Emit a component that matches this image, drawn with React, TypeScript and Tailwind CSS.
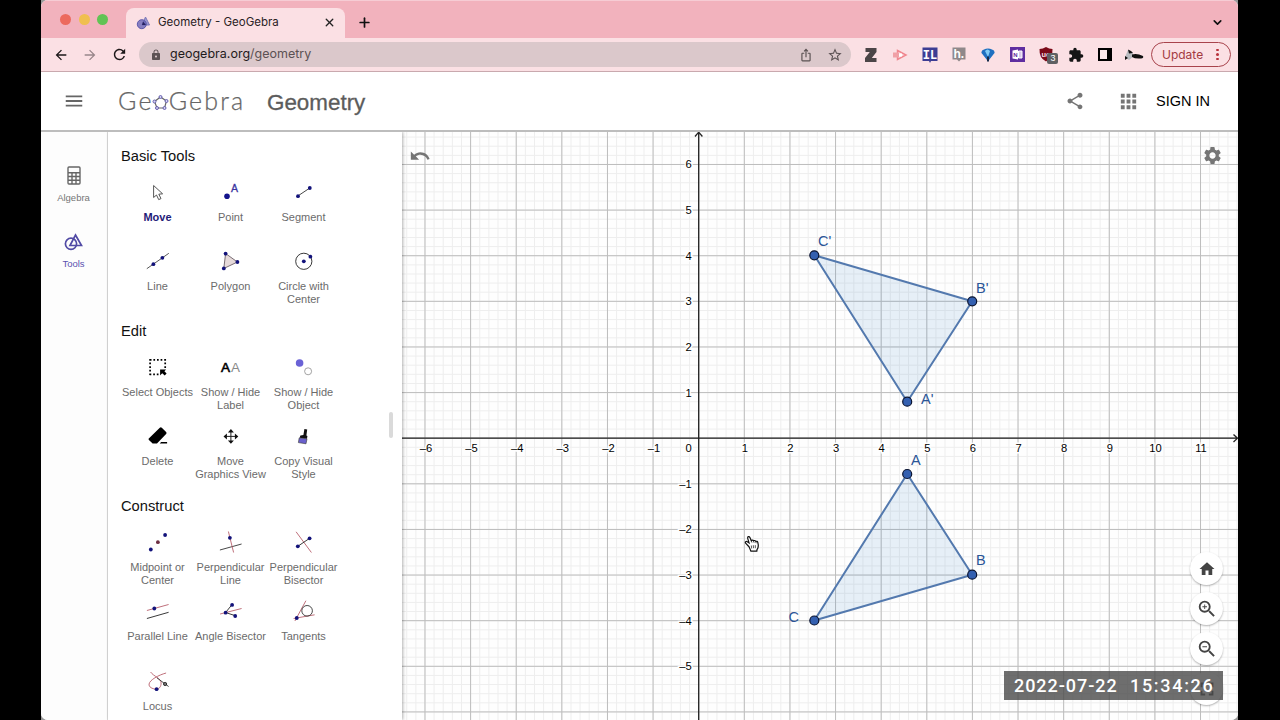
import React from 'react';
import {
  MdApps,
  MdArrowBack,
  MdArrowForward,
  MdExtension,
  MdFullscreen,
  MdHome,
  MdIosShare,
  MdLock,
  MdMenu,
  MdRefresh,
  MdSettings,
  MdShare,
  MdStarBorder,
  MdUndo,
  MdZoomIn,
  MdZoomOut,
} from 'react-icons/md';
import { ChevronDown, Plus, X } from 'lucide-react';

interface Tool {
  label: string;
  icon: React.ReactNode;
  active?: boolean;
}

interface ToolSection {
  title: string;
  tools: Tool[];
}

const NAVY = '#12127a';
const RED = '#b8606c';

const Dot = ({ x, y, r = 1.9, fill = NAVY }: { x: number; y: number; r?: number; fill?: string }) => (
  <circle cx={x} cy={y} r={r} fill={fill} />
);

// every tool drawing shares a 28x28 box centred on 14,14
const Glyph = ({ children }: { children: React.ReactNode }) => (
  <svg width="28" height="28" viewBox="0.4 0 28 28" fill="none" stroke="none" strokeWidth="0.9">
    {children}
  </svg>
);

const SECTIONS: ToolSection[] = [
  {
    title: 'Basic Tools',
    tools: [
      {
        label: 'Move',
        active: true,
        icon: (
          <Glyph>
            <path d="M10 7.5v12l2.9-2.5 2.2 4.6 2.3-1-2.2-4.4 3.8-.4z" fill="#fff" stroke="#444" />
          </Glyph>
        ),
      },
      {
        label: 'Point',
        icon: (
          <Glyph>
            <Dot x={10.4} y={18.2} r={2.8} fill="#14148c" />
            <text x="14.3" y="14.2" fontSize="10.5" fill="#3a34a0" stroke="#3a34a0" strokeWidth="0.3">A</text>
          </Glyph>
        ),
      },
      {
        label: 'Segment',
        icon: (
          <Glyph>
            <path d="M8.2 18 20.2 10" stroke="#333" />
            <Dot x={8.4} y={18.2} />
            <Dot x={20.2} y={10} />
          </Glyph>
        ),
      },
      {
        label: 'Line',
        icon: (
          <Glyph>
            <path d="M3.2 21.7 25.2 6.3" stroke="#444" />
            <Dot x={9.8} y={17.2} />
            <Dot x={18.8} y={10.8} />
          </Glyph>
        ),
      },
      {
        label: 'Polygon',
        icon: (
          <Glyph>
            <path d="M9 6.500 20.8 15 7.2 21.500z" fill="#e6dada" stroke="#6b5f66" />
            <Dot x={9} y={6.6} />
            <Dot x={20.8} y={15} />
            <Dot x={7.2} y={21.4} />
          </Glyph>
        ),
      },
      {
        label: 'Circle with Center',
        icon: (
          <Glyph>
            <circle cx="14.2" cy="14.3" r="8.1" stroke="#222" />
            <Dot x={14.2} y={14.3} />
            <Dot x={20.8} y={9.7} />
          </Glyph>
        ),
      },
    ],
  },
  {
    title: 'Edit',
    tools: [
      {
        label: 'Select Objects',
        icon: (
          <Glyph>
            <path d="M6.2 6.8h16M6.5 6v16M6 21.4h11M21.6 6v10" stroke="#000" strokeWidth="1.7" strokeDasharray="1.7 1.9" />
            <path d="M16.5 16.5h6l-1.7 1.7 2.2 2.4-1.9 1.9-2.4-2.3-2.2 2z" fill="#000" />
          </Glyph>
        ),
      },
      {
        label: 'Show / Hide Label',
        icon: (
          <Glyph>
            <text x="4.5" y="18.8" fontSize="13.5" fill="#000" stroke="#000" strokeWidth="0.6">A</text>
            <text x="14.5" y="18.8" fontSize="13.5" fill="#8a8a8a">A</text>
          </Glyph>
        ),
      },
      {
        label: 'Show / Hide Object',
        icon: (
          <Glyph>
            <Dot x={10} y={10} r={3.8} fill="#6a62d6" />
            <circle cx="18.5" cy="18.3" r="3.5" fill="#fff" stroke="#999" />
          </Glyph>
        ),
      },
      {
        label: 'Delete',
        icon: (
          <Glyph>
            <path d="M5.7 16 16.2 5.8q1-.9 2 0l4.3 4.2q1 1 0 2L13.4 21.4H9L5.1 17.7q-.6-.8.6-1.7zM17.5 20h6v1.5h-7.4z" fill="#000" />
          </Glyph>
        ),
      },
      {
        label: 'Move Graphics View',
        icon: (
          <Glyph>
            <path d="M14.3 8.5v12M8.5 14.4h12" stroke="#222" strokeWidth="1" />
            <path d="M14.3 7l3 3.4h-6zM14.3 21.8l3-3.4h-6zM6.9 14.4l3.4-3v6zM21.7 14.4l-3.4-3v6z" fill="#111" />
          </Glyph>
        ),
      },
      {
        label: 'Copy Visual Style',
        icon: (
          <Glyph>
            <path d="M14.8 7l2.8.5-.8 6 1 .6-.4 2.6-7.4-1 .8-2.3 3-.3z" fill="#111" />
            <path d="M9.6 15.9l7.8.9-1 5-7.6-1.2z" fill="#6a60cc" stroke="#333" strokeWidth="0.6" />
          </Glyph>
        ),
      },
    ],
  },
  {
    title: 'Construct',
    tools: [
      {
        label: 'Midpoint or Center',
        icon: (
          <Glyph>
            <Dot x={7.2} y={21.5} />
            <Dot x={14.3} y={14.2} fill="#6d2f43" />
            <Dot x={21.5} y={7} />
          </Glyph>
        ),
      },
      {
        label: 'Perpendicular Line',
        icon: (
          <Glyph>
            <path d="M3.3 22 25 16" stroke="#333" />
            <path d="M11.8 3.500 17 24.500" stroke={RED} />
            <Dot x={13.3} y={9.8} />
          </Glyph>
        ),
      },
      {
        label: 'Perpendicular Bisector',
        icon: (
          <Glyph>
            <path d="M6.5 3.8 21.8 24.5" stroke={RED} />
            <path d="M8.2 18.3 20 10.3" stroke="#222" />
            <Dot x={8.2} y={18.3} />
            <Dot x={20} y={10.3} />
          </Glyph>
        ),
      },
      {
        label: 'Parallel Line',
        icon: (
          <Glyph>
            <path d="M3.3 13.5 25 7.5" stroke={RED} />
            <path d="M3.3 21.5 25 15.3" stroke="#222" />
            <Dot x={10.7} y={11.5} />
          </Glyph>
        ),
      },
      {
        label: 'Angle Bisector',
        icon: (
          <Glyph>
            <path d="M3.5 17 25 11.5" stroke={RED} />
            <path d="M15.5 7.500 9 15.500l10 3.300" stroke="#222" />
            <Dot x={15.5} y={7.9} />
            <Dot x={9} y={15.7} />
            <Dot x={18.6} y={19} />
          </Glyph>
        ),
      },
      {
        label: 'Tangents',
        icon: (
          <Glyph>
            <path d="M5.3 24 16.3 3.7M4 21.500 25 17.800" stroke={RED} />
            <circle cx="17.5" cy="13.8" r="5.3" stroke="#333" />
            <Dot x={7.2} y={21} />
          </Glyph>
        ),
      },
      {
        label: 'Locus',
        icon: (
          <Glyph>
            <path d="M7 5C10 9.500 17.500 11 17.500 16c0 4-2 6-5 6-4 0-7.500-2-7-5C6 13 15 8 22.500 6" stroke={RED} />
            <path d="M13.5 11 25 19.500" stroke="#333" />
            <circle cx="21.5" cy="17" r="1.6" fill="#777" stroke="#222" />
            <Dot x={13} y={22.2} />
          </Glyph>
        ),
      },
    ],
  },
];

const UNIT = 45.62;
const OX = 698.7;
const OY = 438.2;

const range = (from: number, to: number) => Array.from({ length: to - from + 1 }, (_, i) => from + i);

const POINTS = [
  { name: "C'", x: 814.3, y: 255.3, lx: 818, ly: 245.8 },
  { name: "B'", x: 972.2, y: 301.3, lx: 976, ly: 292.5 },
  { name: "A'", x: 907.2, y: 401.7, lx: 921, ly: 404 },
  { name: 'A', x: 907.2, y: 474, lx: 911, ly: 465 },
  { name: 'B', x: 972.2, y: 574.7, lx: 976, ly: 565 },
  { name: 'C', x: 814.3, y: 620.5, lx: 788.5, ly: 621.8 },
];

const label = (n: number) => (n < 0 ? `–${-n}` : `${n}`);

const GraphicsView: React.FC = () => (
  <svg
    width="836"
    height="590"
    viewBox="402 130 836 590"
    className="block font-['Liberation_Sans',Arial,sans-serif]"
  >
    <rect x="402" y="130" width="836" height="590" fill="#fefefe" />
    <g stroke="#eeeeee" strokeWidth="1">
      {range(-32, 59).map(i => (
        <line key={`v${i}`} x1={OX + (i * UNIT) / 5} x2={OX + (i * UNIT) / 5} y1="130" y2="720" />
      ))}
      {range(-30, 33).map(i => (
        <line key={`h${i}`} y1={OY - (i * UNIT) / 5} y2={OY - (i * UNIT) / 5} x1="402" x2="1238" />
      ))}
    </g>
    <g stroke="#bdbdbd" strokeWidth="1">
      {range(-6, 11).map(i => (
        <line key={`v${i}`} x1={OX + i * UNIT} x2={OX + i * UNIT} y1="130" y2="720" />
      ))}
      {range(-6, 6).map(i => (
        <line key={`h${i}`} y1={OY - i * UNIT} y2={OY - i * UNIT} x1="402" x2="1238" />
      ))}
    </g>

    <g stroke="#222" strokeWidth="1.3" fill="none">
      <path d="M698.7 720V132.5M695 136.5l3.7-4.3 3.7 4.3" />
      <path d="M402 438.2h835M1233.5 434.5l4 3.7-4 3.7" />
    </g>

    <g fontSize="11.2" fill="#000" stroke="#fefefe" strokeWidth="3" paintOrder="stroke">
      {range(-6, 11).filter(i => i !== 0).map(i => (
        <text key={i} x={OX + i * UNIT + (i < 0 ? 1 : 0.5)} y="452" textAnchor="middle">{label(i)}</text>
      ))}
      {range(-5, 6).filter(i => i !== 0).map(i => (
        <text key={i} x="691.7" y={OY - i * UNIT + 4} textAnchor="end">{label(i)}</text>
      ))}
      <text x="691.7" y="452" textAnchor="end">0</text>
    </g>

    <g fill="#3d85c6" fillOpacity="0.12" stroke="#5379ae" strokeWidth="2" strokeLinejoin="round">
      <path d="M814.3 255.3 972.2 301.3 907.2 401.7z" />
      <path d="M907.2 474 972.2 574.7 814.3 620.5z" />
    </g>
    {POINTS.map(p => (
      <g key={p.name}>
        <circle cx={p.x} cy={p.y} r="4.5" fill="#3460b0" stroke="#0b1430" strokeWidth="1.2" />
        <text x={p.lx} y={p.ly} fontSize="14.5" fill="#2b5597">{p.name}</text>
      </g>
    ))}

    {/* hand pointer */}
    <path
      d="M749.2 547l-3.6-3.8c-.9-1.2.5-2.3 1.7-1.5l1.7 1.2-1.3-4.6c-.5-1.8 1.5-2.3 2.2-.7l1.3 3c.6-.8 1.9-.7 2.3.2.7-.6 2-.3 2.3.6.8-.4 1.8 0 2 .9.7 2.6.9 5-.8 7.300l-.2 1.600h-5.900z"
      fill="#fff"
      stroke="#111"
      strokeWidth="1.2"
    />
    <path d="M751.3 545.5l.4 3M753.3 545.2l.2 3M755.3 545.2v3M751.3 540.8l.6 1.8M753.6 541l.5 1.8M755.9 541.7l.3 1.5" stroke="#111" strokeWidth="0.7" />
  </svg>
);

const EXTENSIONS: React.ReactNode[] = [
  <svg width="14" height="14" viewBox="0 0 14 14"><path d="M1.500 0h11v4L7.800 10h4.700v4H1v-4l4.800-6H1.500z" fill="#4b4547" /></svg>,
  <svg width="16" height="12" viewBox="0 0 16 12" fill="none" stroke="#f0868e" strokeWidth="1.5"><path d="M5.500 1.500 14 6 5.500 10.500z" /><path d="M1 3.500h6v5H1z" fill="#f0a0a6" stroke="none" /><path d="M7 4.500h3v3H7z" fill="#fff" stroke="none" /></svg>,
  <svg width="16" height="16" viewBox="0 0 16 16" className="ml-[1px]"><path d="M.5.5h15V14H9l-1 2-1-2H.5z" fill="#3d3d93" /><text x="8" y="11.5" fontSize="12" fontWeight="bold" textAnchor="middle" fill="#fff" fontFamily="'Liberation Mono', monospace">IL</text></svg>,
  <svg width="14" height="15" viewBox="0 0 14 15" className="ml-[1px]"><path d="M.5.5h13v12H9l-2 2-2-2H.5z" fill="#8f888a" /><text x="6.8" y="11" fontSize="12" fontWeight="bold" textAnchor="middle" fill="#fff">h.</text></svg>,
  <svg width="14" height="14" viewBox="0 0 14 14"><path d="M.5 5Q0 2 3 1.500 7-.5 11 1.500q3 .5 2.500 3.500L8 12H6z" fill="#1f6fc0" /><path d="M4 3Q6.500 0 9 3L7 9z" fill="#7fcaf5" /><path d="M7 8.500v5" stroke="#152b4a" strokeWidth="2" /></svg>,
  <svg width="15" height="15" viewBox="0 0 15 15"><path d="M0 0h15v15H0z" fill="#5f2da0" /><path d="M2.500 3.500 8 2.500v10l-5.500-1z" fill="#fff" /><path d="M8.500 4H12v7H8.500z" fill="#d9cbea" stroke="#fff" /><text x="5.3" y="9.7" fontSize="6" fontWeight="bold" textAnchor="middle" fill="#5f2da0">N</text></svg>,
  <div className="relative">
    <svg width="14" height="15" viewBox="0 0 14 15"><path d="M7 0q3 2 6.500 2 .5 9-6.500 12.500Q0 11 .5 2 4 2 7 0z" fill="#7b0a18" /><text x="7" y="9.5" fontSize="7.5" fontWeight="bold" textAnchor="middle" fill="#f3dfe2">uo</text></svg>
    <span className="absolute top-[6px] left-[8px] flex h-[11px] w-[11px] items-center justify-center rounded-[2px] bg-[#5f6063] text-[9px] leading-none text-white">3</span>
  </div>,
  <MdExtension size={16} color="#151515" />,
  <svg width="14" height="13" viewBox="0 0 14 13"><path d="M0 0h14v13H0z" fill="#000" /><path d="M2 2h7v9H2z" fill="#fbe9ec" /></svg>,
  <svg width="20" height="14" viewBox="0 0 20 14"><path d="M1 9 4 2l4 2 2 4-5 4z" fill="#b9bcc0" /><path d="M4 1.500 7 3l2 2-4 .5zM8 6.500q5-1.500 11 1.500 1 2-2 2.500-6 .5-9-1.500zM1 8l3 2-3 2z" fill="#111" /></svg>,
];

const TabStrip: React.FC = () => (
  <div className="flex h-[38px] items-end border-t border-[#f6ccd4] bg-[#f2b2bd]">
    <div className="flex h-[37px] w-[85px] items-center gap-[7.5px] pl-[19px]">
      <span className="h-[11px] w-[11px] rounded-full bg-[#ec6a5e]" />
      <span className="h-[11px] w-[11px] rounded-full bg-[#f0bf4f]" />
      <span className="h-[11px] w-[11px] rounded-full bg-[#61c354]" />
    </div>
    <div className="flex h-[30px] w-[219px] items-center rounded-t-[8px] bg-[#fbe0e4] pr-[9px] pl-[10px]">
      <svg width="15" height="14" viewBox="0 0 15 14">
        <path d="M9.500 1 13.500 9H6z" fill="#9b98cf" stroke="#7c79b8" />
        <circle cx="5.8" cy="8.2" r="4.5" fill="#6a66b8" fillOpacity="0.8" stroke="#5c58aa" />
        <path d="M7 5.500 10 9H6z" fill="#252060" />
      </svg>
      <span className="ml-[7px] text-[11.5px] whitespace-nowrap text-[#2a2224] font-[family-name:Inter,sans-serif]">Geometry - GeoGebra</span>
      <X className="mb-px ml-auto h-[13px] w-[13px] text-[#222]" strokeWidth={2.5} />
    </div>
    <Plus className="mb-[8px] ml-[12px] h-[15px] w-[15px] text-[#111]" strokeWidth={2.7} />
    <ChevronDown className="mr-[14px] mb-[9px] ml-auto h-[13px] w-[13px] text-[#111]" strokeWidth={3} />
  </div>
);

const Toolbar: React.FC = () => (
  <div className="flex h-[34px] items-center border-b border-[#c9a9ae] bg-[#fbe0e4]">
    <div className="flex w-[98px] items-center gap-[13px] pl-[12px] text-[#1c1718]">
      <MdArrowBack size={16} />
      <MdArrowForward size={16} className="text-[#98868a]" />
      <MdRefresh size={17} />
    </div>
    <div className="flex h-[25px] w-[712px] items-center rounded-full bg-[#dbc8cb] pr-[8px] pl-[11px] text-[#5b5153]">
      <MdLock size={12} />
      <span className="ml-[8px] text-[12.5px] font-[family-name:Inter,sans-serif]">
        <span className="text-[#1f1a1b]">geogebra.org</span>/geometry
      </span>
      <MdIosShare size={14} className="ml-auto" />
      <MdStarBorder size={16} className="ml-[14px]" />
    </div>
    <div className="ml-[5px] flex">
      {EXTENSIONS.map((icon, i) => (
        <div key={i} className="flex w-[29.3px] items-center justify-center">{icon}</div>
      ))}
    </div>
    <div className="ml-[2px] flex h-[25px] w-[80px] items-center justify-between rounded-full border border-[#a8434c] pr-[11px] pl-[10px] text-[12px] text-[#a33a41] font-[family-name:Inter,sans-serif]">
      Update
      <span className="flex flex-col gap-[2px]">
        <i className="h-[2.5px] w-[2.5px] rounded-full bg-[#b8323c]" />
        <i className="h-[2.5px] w-[2.5px] rounded-full bg-[#b8323c]" />
        <i className="h-[2.5px] w-[2.5px] rounded-full bg-[#b8323c]" />
      </span>
    </div>
  </div>
);

const Logo: React.FC = () => (
  <div className="flex items-center text-[25px] leading-none tracking-[2.2px] text-[#666] font-[family-name:Lato,sans-serif]">
    <span className="font-light [-webkit-text-stroke:0.25px_#666]">Ge</span>
    <svg width="17" height="17" viewBox="0 0 17 17" className="-ml-[2px] mt-[4px]" fill="#d5d2f2" stroke="#666" strokeWidth="1.2">
      <path d="M8.5 3 14.500 7 12.500 14H5L2.500 7.500z" fill="none" />
      {[[8.5, 3], [14.5, 7], [12.5, 14], [5, 14], [2.5, 7.5]].map(([x, y]) => (
        <circle key={x} cx={x} cy={y} r="1.5" stroke="#5a55a8" strokeWidth="0.9" />
      ))}
    </svg>
    <span className="font-light [-webkit-text-stroke:0.25px_#666]">Gebra</span>
  </div>
);

const AppHeader: React.FC = () => (
  <header className="flex h-[60px] items-center border-b-2 border-[#bdbdbd] bg-white pr-[28px] pl-[22px] text-[#666]">
    <MdMenu size={22} />
    <div className="-mt-px ml-[33px] w-[149px]">
      <Logo />
    </div>
    <h1 className="mt-[4px] text-[22.4px] leading-none text-[#5c5c5c] [-webkit-text-stroke:0.3px_#5c5c5c]">Geometry</h1>
    <MdShare size={20} className="ml-auto text-[#757575]" />
    <MdApps size={23} className="ml-[32px] text-[#757575]" />
    <span className="mt-[2px] ml-[16px] text-[14.5px] text-black">SIGN IN</span>
  </header>
);

const SideNav: React.FC = () => (
  <nav className="flex w-[67px] flex-col items-center border-r border-[#dcdcdc] bg-[#fdfdfd] pt-[34px] pr-[1px] text-[9.5px] text-[#757575]">
    <svg width="14" height="19" viewBox="0 0 14 19" fill="none" stroke="#666" strokeWidth="1.4">
      <rect x="1" y="1" width="12" height="17" rx="1" />
      <path d="M1 6.800h12M1 10.500h12M1 14.200h12M5 7v11M9 7v11" />
    </svg>
    <span className="mt-[6px]">Algebra</span>
    <svg width="19" height="18" viewBox="0 0 19 18" fill="none" stroke="#524ba5" strokeWidth="1.7" className="mt-[28px]">
      <circle cx="7" cy="10.8" r="5.6" />
      <path d="M11.500 2 17.500 12.500H6z" />
    </svg>
    <span className="mt-[6px] text-[#5a52b0]">Tools</span>
  </nav>
);

const ToolPanel: React.FC = () => (
  <aside className="relative z-10 w-[294px] overflow-hidden bg-white pt-[9.6px] pl-[13px] shadow-[1px_0_3px_rgba(0,0,0,0.3)]">
    {SECTIONS.map(section => (
      <section key={section.title}>
        <h2 className="h-[36.4px] text-[14.7px] leading-[29px] text-[#111]">{section.title}</h2>
        <div className="grid auto-rows-[69.3px] grid-cols-[73px_73px_73px]">
          {section.tools.map(tool => (
            <div key={tool.label} className="flex flex-col items-center">
              {tool.icon}
              <span
                className={`mt-[5px] text-center text-[11px] leading-[13px] ${
                  tool.active ? 'font-bold text-[#1f1b78]' : 'text-[#6b6b6b]'
                }`}
              >
                {tool.label}
              </span>
            </div>
          ))}
        </div>
      </section>
    ))}
    <div className="absolute top-[280px] right-[9px] h-[26px] w-[4px] rounded-full bg-[#dadada]" />
  </aside>
);

const ZOOM_BUTTONS = [
  { name: 'home', icon: <MdHome size={18} /> },
  { name: 'in', icon: <MdZoomIn size={22} /> },
  { name: 'out', icon: <MdZoomOut size={22} /> },
  { name: 'full', icon: <MdFullscreen size={22} /> },
];

export default function App() {
  return (
    <div className="flex h-[720px] w-[1280px] justify-center overflow-hidden bg-black pr-[1px] font-['Liberation_Sans',Arial,sans-serif]">
      <div className="w-[1197px] bg-[#999]">
        <div className="flex h-full flex-col overflow-hidden rounded-[7px] bg-white">
          <TabStrip />
          <Toolbar />
          <AppHeader />
          <main className="flex flex-1 overflow-hidden">
            <SideNav />
            <ToolPanel />
            <div className="relative flex h-[588px] w-[836px] items-end overflow-hidden">
              <GraphicsView />
              <MdUndo size={22} className="absolute top-[13px] left-[7px] text-[#757575]" />
              <MdSettings size={21} className="absolute top-[13px] right-[15px] text-[#757575]" />
              <div className="absolute top-[420px] right-[15px] flex flex-col gap-[7px]">
                {ZOOM_BUTTONS.map(b => (
                  <button key={b.name} className="flex h-[33px] w-[33px] items-center justify-center rounded-full bg-white text-[#444] shadow-[0_1px_2px_rgba(0,0,0,0.3)]">
                    {b.icon}
                  </button>
                ))}
              </div>
              <div className="absolute top-[539px] left-[602px] flex h-[29px] w-[219px] items-center gap-[11px] bg-[#4a4a4a]/80 pl-[10px] text-[18px] text-white font-[family-name:Roboto,sans-serif]">
                <span className="w-[105px] font-medium tracking-[0.95px]">2022-07-22</span>
                <span className="font-medium tracking-[1.7px]">15:34:26</span>
              </div>
            </div>
          </main>
        </div>
      </div>
    </div>
  );
}
